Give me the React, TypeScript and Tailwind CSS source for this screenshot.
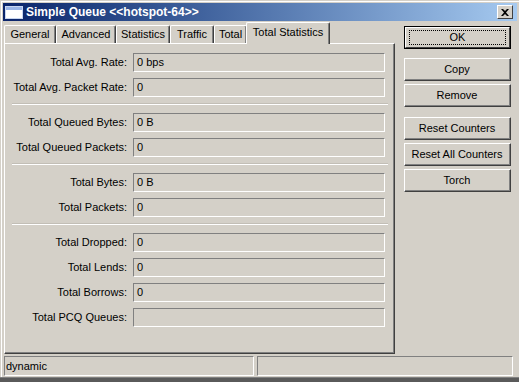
import React from "react";

const tabs = [
  { label: "General", w: "w-[52px]" },
  { label: "Advanced", w: "w-[60px]" },
  { label: "Statistics", w: "w-[54px]" },
  { label: "Traffic", w: "w-[44px]" },
  { label: "Total", w: "w-[33px]" },
];

const groups: { label: string; value: string }[][] = [
  [
    { label: "Total Avg. Rate:", value: "0 bps" },
    { label: "Total Avg. Packet Rate:", value: "0" },
  ],
  [
    { label: "Total Queued Bytes:", value: "0 B" },
    { label: "Total Queued Packets:", value: "0" },
  ],
  [
    { label: "Total Bytes:", value: "0 B" },
    { label: "Total Packets:", value: "0" },
  ],
  [
    { label: "Total Dropped:", value: "0" },
    { label: "Total Lends:", value: "0" },
    { label: "Total Borrows:", value: "0" },
    { label: "Total PCQ Queues:", value: "" },
  ],
];

function Field({ label, value }: { label: string; value: string }) {
  return (
    <div className="flex items-center h-[19px]">
      <div className="w-[123px] text-right pr-px whitespace-nowrap">{label}</div>
      <div className="ml-[5px] w-[252px] h-[19px] border border-t-[#808080] border-l-[#808080] border-b-white border-r-white flex items-center pl-[3px] leading-none">
        {value}
      </div>
    </div>
  );
}

function Button({ label, isDefault }: { label: string; isDefault?: boolean }) {
  if (isDefault) {
    return (
      <div className="h-[23px] w-[107px] border border-black">
        <div className="h-full w-full border border-t-white border-l-white border-b-[#404040] border-r-[#404040] flex items-center justify-center">
          <div className="h-[15px] w-[97px] border border-dotted border-black flex items-center justify-center">
            {label}
          </div>
        </div>
      </div>
    );
  }
  return (
    <div className="h-[23px] w-[107px] border border-t-white border-l-white border-b-[#404040] border-r-[#404040]">
      <div className="h-full w-full border-r border-b border-[#808080] flex items-center justify-center">
        {label}
      </div>
    </div>
  );
}

export default function App() {
  return (
    <div className="w-[519px] h-[382px] bg-[#d4d0c8] text-black text-[11px] font-['Liberation_Sans',Arial,sans-serif] flex flex-col overflow-hidden">
      <div className="flex-1 flex flex-col border-t border-l border-white mt-px ml-px pt-px pl-px">
        {/* title bar */}
        <div className="h-[18px] mr-[2px] flex items-center bg-gradient-to-r from-[#0a246a] to-[#a6caf0]">
          <div className="ml-[3px] w-[16px] h-[11px] bg-white border-t-[3px] border-[#9bb6e8] shadow-[0_0_0_1px_#c8d6f0]" />
          <div className="ml-[4px] text-white font-bold text-[12px] leading-none whitespace-nowrap">
            Simple Queue &lt;&lt;hotspot-64&gt;&gt;
          </div>
          <div className="ml-auto mr-[4px] w-[16px] h-[14px] bg-[#d4d0c8] border border-t-white border-l-white border-b-[#404040] border-r-[#404040] flex items-center justify-center">
            <svg width="8" height="7" viewBox="0 0 8 7">
              <path d="M0 0h2l2 2 2-2h2L5 3.5 8 7H6L4 5 2 7H0l3-3.5z" fill="black" />
            </svg>
          </div>
        </div>

        <div className="flex mt-px">
          {/* tabs + panel */}
          <div className="ml-px w-[391px] flex flex-col">
            <div className="flex items-end h-[21px] relative z-10">
              {tabs.map((t) => (
                <div
                  key={t.label}
                  className={`${t.w} h-[18px] border-t border-l border-white border-r border-r-[#404040] rounded-t-[2px] shadow-[inset_-1px_0_0_#808080] flex items-center justify-center leading-none`}
                >
                  {t.label}
                </div>
              ))}
              <div className="w-[84px] h-[22px] -ml-[1px] -mb-px bg-[#d4d0c8] border-t border-l border-white border-r border-r-[#404040] rounded-t-[2px] shadow-[inset_-1px_0_0_#808080] flex items-center justify-center leading-none pb-[2px]">
                Total Statistics
              </div>
            </div>
            <div className="h-[311px] border border-t-white border-l-white border-b-[#404040] border-r-[#404040] shadow-[inset_-1px_-1px_0_#808080] pt-[9px]">
              {groups.map((g, gi) => (
                <div key={gi}>
                  {gi > 0 && (
                    <div className="mt-[6px] mb-[8px] ml-[7px] mr-[6px] h-[2px] border-t border-[#c2beb6] border-b border-b-white" />
                  )}
                  <div className="flex flex-col gap-[6px]">
                    {g.map((f) => (
                      <Field key={f.label} label={f.label} value={f.value} />
                    ))}
                  </div>
                </div>
              ))}
            </div>
          </div>

          {/* buttons */}
          <div className="ml-[9px] mt-[4px] flex flex-col">
            <Button label="OK" isDefault />
            <div className="mt-[9px] flex flex-col gap-[3px]">
              <Button label="Copy" />
              <Button label="Remove" />
            </div>
            <div className="mt-[10px] flex flex-col gap-[3px]">
              <Button label="Reset Counters" />
              <Button label="Reset All Counters" />
              <Button label="Torch" />
            </div>
          </div>
        </div>

        {/* status bar */}
        <div className="mt-[2px] ml-px flex gap-[3px] h-[20px]">
          <div className="w-[250px] h-full border border-t-[#808080] border-l-[#808080] border-b-white border-r-white flex items-center pl-px leading-none">
            dynamic
          </div>
          <div className="w-[256px] h-full border border-t-[#808080] border-l-[#808080] border-b-white border-r-white" />
        </div>
      </div>
      <div className="h-[5px] bg-[#5a5a5a] border-t border-[#808080]" />
    </div>
  );
}
